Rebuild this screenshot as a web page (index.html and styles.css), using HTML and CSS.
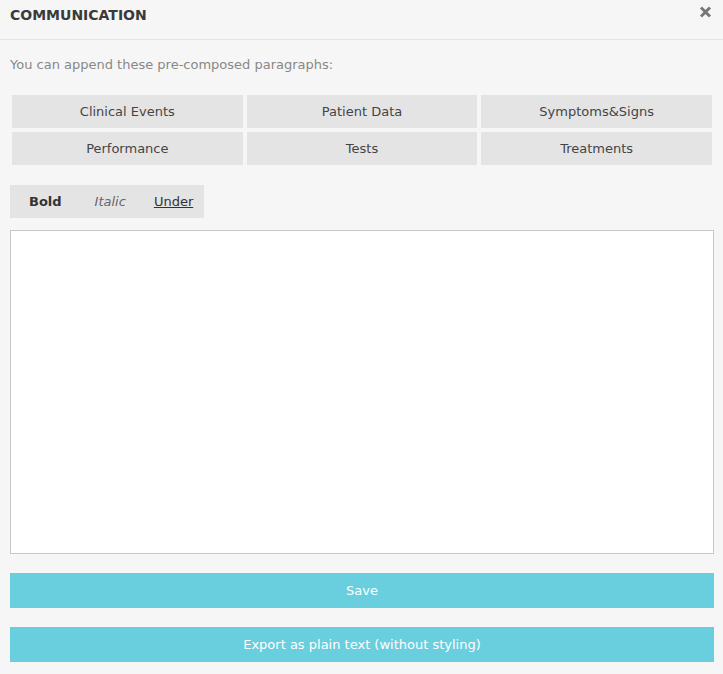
FILE: index.html
```html
<!DOCTYPE html>
<html>
<head>
<meta charset="utf-8">
<link rel="stylesheet" href="styles.css">
</head>
<body>
<div class="modal">
  <div class="header">
    <h1 class="title">COMMUNICATION</h1>
    <svg class="close" width="13" height="12" viewBox="0 0 13 12"><path d="M2 1.5 L11 10.5 M11 1.5 L2 10.5" stroke="#777" stroke-width="3" fill="none"/></svg>
  </div>
  <div class="body">
    <p class="intro">You can append these pre-composed paragraphs:</p>
    <div class="presets">
      <button class="preset">Clinical Events</button>
      <button class="preset">Patient Data</button>
      <button class="preset">Symptoms&amp;Signs</button>
      <button class="preset">Performance</button>
      <button class="preset">Tests</button>
      <button class="preset">Treatments</button>
    </div>
    <div class="toolbar">
      <button class="tool tool-bold">Bold</button>
      <button class="tool tool-italic">Italic</button>
      <button class="tool tool-under">Under</button>
    </div>
    <div class="editor"></div>
    <button class="action">Save</button>
    <button class="action">Export as plain text (without styling)</button>
  </div>
</div>
</body>
</html>
```

FILE: styles.css
```css
html, body {
  margin: 0;
  padding: 0;
  background: #f6f6f6;
}
body {
  font-family: "DejaVu Sans", sans-serif;
  font-size: 13px;
  color: #444;
  width: 723px;
  height: 674px;
  overflow: hidden;
}
.header {
  height: 40px;
  border-bottom: 1px solid #e3e3e3;
  display: flex;
  align-items: flex-start;
  justify-content: space-between;
  padding: 0 11px 0 10px;
  box-sizing: border-box;
}
.title {
  margin: 7px 0 0;
  font-size: 14px;
  font-weight: bold;
  color: #3a3a3a;
}
.close {
  margin-top: 6px;
  display: block;
}
.body {
  padding: 0 9px 0 10px;
}
.intro {
  margin: 17px 0 0;
  color: #888;
  font-size: 13px;
  line-height: 16px;
}
.presets {
  margin-top: 20px;
  display: grid;
  grid-template-columns: repeat(3, 1fr);
}
.preset {
  margin: 2px;
  height: 33px;
  border: 0;
  background: #e4e4e4;
  font-family: inherit;
  font-size: 13px;
  color: #444;
  padding: 0;
}
.toolbar {
  margin-top: 18px;
  width: 194px;
  height: 33px;
  background: #e4e4e4;
  display: flex;
  align-items: center;
}
.tool {
  border: 0;
  background: none;
  font-family: inherit;
  font-size: 13px;
  color: #333;
  padding: 0;
}
.tool-bold { font-weight: bold; margin-left: 19px; }
.tool-italic { font-style: italic; margin-left: 33px; color: #666; }
.tool-under { text-decoration: underline; margin-left: 28px; }
.editor {
  margin-top: 12px;
  height: 322px;
  background: #fff;
  border: 1px solid #c8c8c8;
}
.action {
  display: block;
  width: 100%;
  height: 35px;
  margin-top: 19px;
  border: 0;
  background: #69cede;
  color: #fff;
  font-family: inherit;
  font-size: 13px;
  padding: 0;
}
```
